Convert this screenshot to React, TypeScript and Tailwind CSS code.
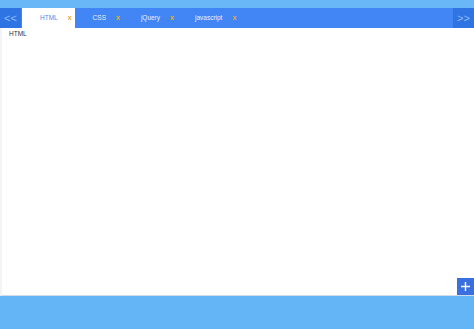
import React from "react";

const tabs = ["HTML", "CSS", "jQuery", "javascript"];

export default function App() {
  return (
    <div className="w-[474px] h-[329px] flex flex-col bg-[#64b5f6] font-['Liberation_Sans',Arial,sans-serif] overflow-hidden">
      <div className="h-[8px] bg-[#6ab7f7]" />
      <div className="h-[20px] flex bg-[#4285f4]">
        <div className="w-[21px] flex items-center justify-center bg-[#2f74e3] text-[#8cbcff] text-[11px] leading-none">&lt;&lt;</div>
        <div className="flex flex-1 pl-[1px]">
          {tabs.map((t, i) => (
            <div
              key={t}
              className={`flex items-center pl-[18px] pr-[3px] text-[6.5px] ${i === 0 ? "bg-white text-[#4a8af4]" : "text-[#e8f0ff]"}`}
            >
              <span>{t}</span>
              <span className="ml-[10px] text-[#e9a83a] text-[7px] font-bold">x</span>
            </div>
          ))}
        </div>
        <div className="w-[21px] flex items-center justify-center bg-[#2f74e3] text-[#8cbcff] text-[11px] leading-none">&gt;&gt;</div>
      </div>
      <div className="relative h-[268px] bg-white border-l-[2px] border-[#f2f4f6] border-b border-b-[#cfdbe6]">
        <div className="pl-[7px] pt-[1px] text-[6.5px] text-[#333]">HTML</div>
        <div className="absolute right-0 bottom-0 w-[17px] h-[17px] bg-[#3a6fe0] flex items-center justify-center">
          <svg width="11" height="11" viewBox="0 0 11 11">
            <path d="M5.5 1v9M1 5.5h9" stroke="white" strokeWidth="1.4" />
          </svg>
        </div>
      </div>
      <div className="flex-1 bg-[#64b5f6]" />
    </div>
  );
}
